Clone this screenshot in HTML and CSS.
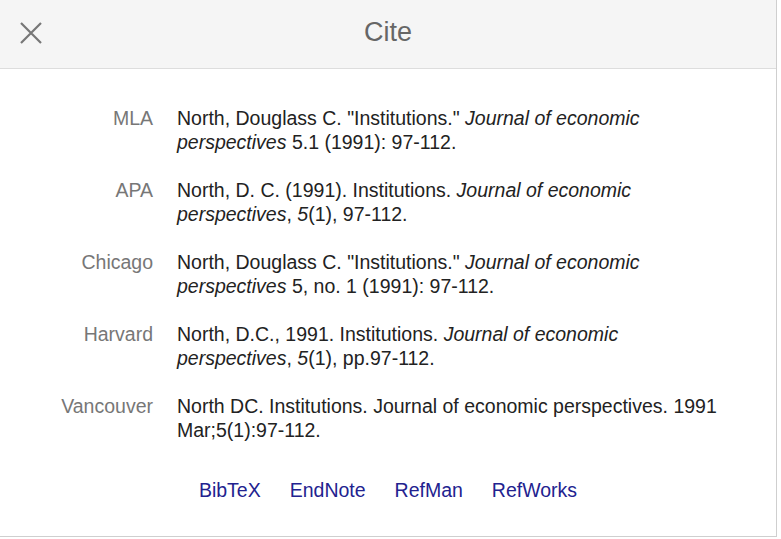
FILE: index.html
```html
<!DOCTYPE html>
<html>
<head>
<meta charset="utf-8">
<link rel="stylesheet" href="styles.css">
</head>
<body>
<div class="dialog">
  <div class="header">
    <button class="close" aria-label="Close">
      <svg width="22" height="22" viewBox="0 0 22 22"><path d="M1 1 L21 21 M21 1 L1 21" stroke="#777" stroke-width="2.2" fill="none"/></svg>
    </button>
    <div class="title">Cite</div>
  </div>
  <div class="content">
    <div class="cites">
      <div class="label">MLA</div>
      <div class="text">North, Douglass C. "Institutions." <i>Journal of economic perspectives</i> 5.1 (1991): 97-112.</div>
      <div class="label">APA</div>
      <div class="text">North, D. C. (1991). Institutions. <i>Journal of economic perspectives</i>, <i>5</i>(1), 97-112.</div>
      <div class="label">Chicago</div>
      <div class="text">North, Douglass C. "Institutions." <i>Journal of economic perspectives</i> 5, no. 1 (1991): 97-112.</div>
      <div class="label">Harvard</div>
      <div class="text">North, D.C., 1991. Institutions. <i>Journal of economic perspectives</i>, <i>5</i>(1), pp.97-112.</div>
      <div class="label">Vancouver</div>
      <div class="text">North DC. Institutions. Journal of economic perspectives. 1991 Mar;5(1):97-112.</div>
    </div>
    <div class="links">
      <a href="#">BibTeX</a>
      <a href="#">EndNote</a>
      <a href="#">RefMan</a>
      <a href="#">RefWorks</a>
    </div>
  </div>
</div>
</body>
</html>
```

FILE: styles.css
```css
html, body {
  margin: 0;
  padding: 0;
  background: #ffffff;
}
body {
  font-family: "Liberation Sans", Arial, sans-serif;
}
.dialog {
  width: 777px;
  height: 537px;
  box-sizing: border-box;
  border-right: 1px solid #cfcfcf;
  border-bottom: 1px solid #cfcfcf;
  background: #fff;
}
.header {
  height: 68px;
  background: #f5f5f5;
  border-bottom: 1px solid #dddddd;
  display: flex;
  align-items: center;
  justify-content: center;
  position: relative;
}
.close {
  position: absolute;
  left: 20px;
  top: 22px;
  padding: 0;
  border: 0;
  background: none;
  width: 22px;
  height: 22px;
  display: flex;
}
.title {
  font-size: 27px;
  color: #666;
  margin-top: -4px;
}
.content {
  padding-top: 37px;
}
.cites {
  display: grid;
  grid-template-columns: 153px 555px;
  column-gap: 24px;
  row-gap: 24px;
  font-size: 19.5px;
  line-height: 24px;
}
.label {
  text-align: right;
  color: #777;
}
.text {
  color: #222;
}
.links {
  margin-top: 36px;
  display: flex;
  justify-content: center;
  gap: 29px;
  font-size: 19.5px;
  line-height: 24px;
}
.links a {
  color: #22228f;
  text-decoration: none;
}
```
